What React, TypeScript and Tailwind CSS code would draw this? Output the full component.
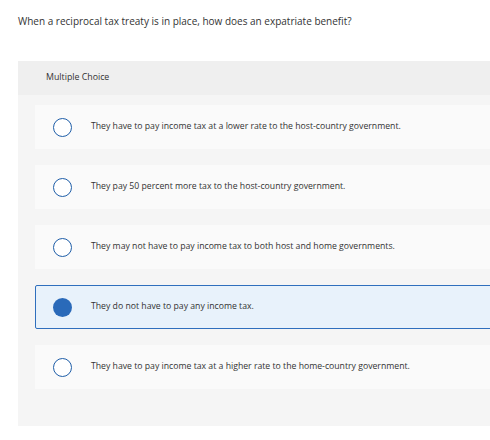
const OPTIONS = [
  'They have to pay income tax at a lower rate to the host-country government.',
  'They pay 50 percent more tax to the host-country government.',
  'They may not have to pay income tax to both host and home governments.',
  'They do not have to pay any income tax.',
  'They have to pay income tax at a higher rate to the home-country government.',
];

const SELECTED = 3;

export default function App() {
  return (
    <div
      className="w-[490px] h-[440px] overflow-hidden bg-white text-[#333333]"
      style={{ fontFamily: '"Open Sans", "Liberation Sans", sans-serif' }}
    >
      <p className="pl-[18px] pt-[14px] text-[10px] leading-[14px]">
        When a reciprocal tax treaty is in place, how does an expatriate benefit?
      </p>

      <div className="ml-[18px] mt-[33px] w-[490px] bg-[#f5f5f5] pb-[37px]">
        <div className="h-[34px] bg-[#efefef] pl-[28px] flex items-center text-[8.8px]">
          Multiple Choice
        </div>

        <div className="mt-[10px] ml-[17px] flex flex-col gap-[16px]">
          {OPTIONS.map((text, i) => {
            const selected = i === SELECTED;
            return (
              <div
                key={i}
                className={
                  selected
                    ? 'h-[44px] flex items-center bg-[#e8f2fb] border border-[#2f6fbd] rounded-[2px] pl-[17px]'
                    : 'h-[44px] flex items-center bg-[#fafafa] pl-[18px]'
                }
              >
                {selected ? (
                  <span className="w-[19px] h-[19px] rounded-full bg-[#2a6ab9] shrink-0" />
                ) : (
                  <span className="w-[19px] h-[19px] rounded-full border-[1.5px] border-[#1f5ea8] bg-white shrink-0" />
                )}
                <span className="ml-[19px] text-[8.7px]">{text}</span>
              </div>
            );
          })}
        </div>
      </div>
    </div>
  );
}
